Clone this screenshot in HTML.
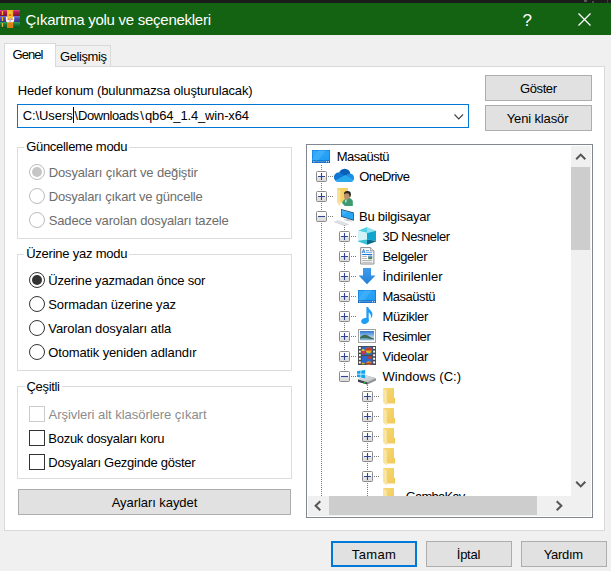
<!DOCTYPE html>
<html lang="tr">
<head>
<meta charset="utf-8">
<title>Çıkartma yolu ve seçenekleri</title>
<style>
html,body{margin:0;padding:0}
body{width:611px;height:571px;overflow:hidden;background:#f0f0f0;font-family:"Liberation Sans",sans-serif;font-size:13px;color:#000;position:relative}
.a{position:absolute;box-sizing:border-box}
.t{position:absolute;white-space:nowrap;line-height:16px;height:16px;font-size:13px}
.t.w{color:#fff}
.t.d{color:#6d6d6d}
.t.d2{color:#8c8c8c}
.t.lg{background:#fff;box-shadow:-2px 0 0 #fff,2px 0 0 #fff}
.btn{position:absolute;box-sizing:border-box;background:#e1e1e1;border:1px solid #adadad}
.gb{position:absolute;box-sizing:border-box;border:1px solid #dcdcdc}
.rd{position:absolute;box-sizing:border-box;width:16px;height:16px;border-radius:50%;border:1px solid #333;background:#fff}
.rd.dis{border-color:#bcbcbc}
.cb{position:absolute;box-sizing:border-box;width:16px;height:16px;border:1px solid #333;background:#fff}
.cb.dis{border-color:#cccccc}
svg{position:absolute;overflow:visible}
</style>
</head>
<body>
<!-- title bar -->
<div class="a" style="left:0;top:0;width:611px;height:3px;background:#1b1b1b"></div>
<div class="a" style="left:0;top:3px;width:611px;height:32px;background:#136313"></div>
<div class="a" style="left:584px;top:0;width:3px;height:2px;background:#5a5a5a"></div>
<div class="a" style="left:592px;top:1px;width:2px;height:2px;background:#4a4a4a"></div>
<div class="a" style="left:607px;top:0;width:1px;height:3px;background:#3c3c3c"></div>
<svg style="left:0;top:10px" width="20" height="18" viewBox="0 0 20 18"><defs><linearGradient id="b1" x1="0" y1="0" x2="0" y2="1"><stop offset="0" stop-color="#d9468f"/><stop offset="0.35" stop-color="#b5194f"/><stop offset="1" stop-color="#7d1131"/></linearGradient><linearGradient id="b2" x1="0" y1="0" x2="0" y2="1"><stop offset="0" stop-color="#7474d6"/><stop offset="0.4" stop-color="#4a4ab2"/><stop offset="1" stop-color="#34348a"/></linearGradient><linearGradient id="b3" x1="0" y1="0" x2="0" y2="1"><stop offset="0" stop-color="#2fa257"/><stop offset="0.4" stop-color="#147a3a"/><stop offset="1" stop-color="#0b4f24"/></linearGradient><linearGradient id="bl" x1="0" y1="0" x2="0" y2="1"><stop offset="0" stop-color="#f2bd22"/><stop offset="0.3" stop-color="#e88f14"/><stop offset="1" stop-color="#d97a10"/></linearGradient></defs><rect x="0" y="0" width="20" height="6" fill="url(#b1)"/><rect x="0" y="6" width="20" height="6" fill="url(#b2)"/><rect x="0" y="12" width="20" height="6" fill="url(#b3)"/><rect x="1.8" y="1" width="1.3" height="4" fill="#f0b428"/><rect x="1.8" y="7" width="1.3" height="4" fill="#f0b428"/><rect x="1.8" y="13" width="1.3" height="4" fill="#f0b428"/><rect x="7" y="0" width="6.2" height="18" fill="url(#bl)"/><path d="M7.6 4.2C7.6 2 8.6 1.2 10.1 1.2C11.6 1.2 12.6 2 12.6 4.2V8.4H7.6Z" fill="#f4c32e"/><path d="M8.8 4.2H11.4V6H8.8Z" fill="#d9780f"/><path d="M5.9 6.8H7.6V10H12.6V6.8H14.2V10.2C14.2 11.6 13.4 12.2 12.2 12.2H7.9C6.7 12.2 5.9 11.6 5.9 10.2Z" fill="#f4f4f6"/><rect x="9.3" y="8" width="1.6" height="4" fill="#b9bcc4"/></svg>
<svg style="left:577.5px;top:13px" width="13" height="13" viewBox="0 0 13 13"><path d="M0.5 0.5 L12.5 12.5 M12.5 0.5 L0.5 12.5" stroke="#fff" stroke-width="1.3" fill="none"/></svg>

<!-- tab control -->
<div class="a" style="left:4px;top:66px;width:601px;height:465px;background:#fff;border:1px solid #d9d9d9"></div>
<div class="a" style="left:55px;top:45px;width:56px;height:22px;background:#f0f0f0;border:1px solid #d9d9d9"></div>
<div class="a" style="left:4px;top:43px;width:52px;height:24px;background:#fff;border:1px solid #d9d9d9;border-bottom:none"></div>

<!-- combo -->
<div class="a" style="left:17px;top:104px;width:452px;height:24px;background:#fff;border:1px solid #0078d7"></div>
<div class="a" style="left:73px;top:107px;width:1px;height:16px;background:#000"></div>
<svg style="left:453px;top:113px" width="12" height="8" viewBox="0 0 12 8"><path d="M1.5 1.5 L5.75 6 L10 1.5" stroke="#404040" stroke-width="1.1" fill="none"/></svg>

<!-- buttons -->
<div class="btn" style="left:485px;top:75px;width:107px;height:26px"></div>
<div class="btn" style="left:485px;top:105px;width:107px;height:26px"></div>
<div class="btn" style="left:18px;top:489px;width:273px;height:26px"></div>
<div class="btn" style="left:331px;top:541px;width:86px;height:26px;border:2px solid #0078d7"></div>
<div class="btn" style="left:426px;top:541px;width:86px;height:26px"></div>
<div class="btn" style="left:521px;top:541px;width:86px;height:26px"></div>

<!-- group boxes -->
<div class="gb" style="left:17px;top:147px;width:275px;height:92px"></div>
<div class="gb" style="left:17px;top:254px;width:275px;height:117px"></div>
<div class="gb" style="left:17px;top:386px;width:275px;height:93px"></div>

<!-- radios -->
<div class="rd dis" style="left:29px;top:164px"><div class="a" style="left:2px;top:2px;width:10px;height:10px;border-radius:50%;background:#c6c6c6"></div></div>
<div class="rd dis" style="left:29px;top:188px"></div>
<div class="rd dis" style="left:29px;top:212px"></div>
<div class="rd" style="left:29px;top:272px"><div class="a" style="left:2px;top:2px;width:10px;height:10px;border-radius:50%;background:#333"></div></div>
<div class="rd" style="left:29px;top:296px"></div>
<div class="rd" style="left:29px;top:320px"></div>
<div class="rd" style="left:29px;top:344px"></div>

<!-- checkboxes -->
<div class="cb dis" style="left:29px;top:406px"></div>
<div class="cb" style="left:29px;top:430px"></div>
<div class="cb" style="left:29px;top:454px"></div>

<span class="t w" style="left:25.5px;top:11px;font-size:15px;line-height:18px;height:18px;letter-spacing:-0.262px;">Çıkartma yolu ve seçenekleri</span>
<span class="t w" style="left:522.5px;top:11px;font-size:17px;line-height:20px;height:20px;">?</span>
<span class="t" style="left:12.5px;top:47px;letter-spacing:-0.926px;">Genel</span>
<span class="t" style="left:60px;top:49px;letter-spacing:-0.406px;">Gelişmiş</span>
<span class="t" style="left:17.7px;top:83px;letter-spacing:-0.133px;">Hedef konum (bulunmazsa oluşturulacak)</span>
<span class="t" style="left:22.7px;top:108px;letter-spacing:-0.080px;">C:\Users</span>
<span class="t" style="left:74.6px;top:108px;">\</span>
<span class="t" style="left:78px;top:108px;letter-spacing:-0.416px;">Downloads</span>
<span class="t" style="left:140.2px;top:108px;">\</span>
<span class="t" style="left:145px;top:108px;letter-spacing:-0.150px;">qb64_1.4_win-x64</span>
<span class="t" style="left:520px;top:81px;letter-spacing:-0.403px;">Göster</span>
<span class="t" style="left:506.7px;top:111px;letter-spacing:-0.133px;">Yeni klasör</span>
<span class="t lg" style="left:26.2px;top:139px;letter-spacing:-0.300px;">Güncelleme modu</span>
<span class="t d" style="left:48.75px;top:165px;letter-spacing:-0.155px;">Dosyaları çıkart ve değiştir</span>
<span class="t d" style="left:48.75px;top:189px;letter-spacing:-0.211px;">Dosyaları çıkart ve güncelle</span>
<span class="t d" style="left:48.75px;top:213px;letter-spacing:-0.167px;">Sadece varolan dosyaları tazele</span>
<span class="t lg" style="left:26.2px;top:246px;letter-spacing:-0.232px;">Üzerine yaz modu</span>
<span class="t" style="left:48.3px;top:273px;letter-spacing:-0.202px;">Üzerine yazmadan önce sor</span>
<span class="t" style="left:48.3px;top:297px;letter-spacing:-0.125px;">Sormadan üzerine yaz</span>
<span class="t" style="left:48.3px;top:321px;letter-spacing:-0.085px;">Varolan dosyaları atla</span>
<span class="t" style="left:48.3px;top:345px;letter-spacing:-0.144px;">Otomatik yeniden adlandır</span>
<span class="t lg" style="left:26.5px;top:379px;letter-spacing:-0.318px;">Çeşitli</span>
<span class="t d2" style="left:48.5px;top:407px;letter-spacing:-0.031px;">Arşivleri alt klasörlere çıkart</span>
<span class="t" style="left:48.3px;top:431px;letter-spacing:-0.269px;">Bozuk dosyaları koru</span>
<span class="t" style="left:48.3px;top:455px;letter-spacing:-0.276px;">Dosyaları Gezginde göster</span>
<span class="t" style="left:111.75px;top:495px;letter-spacing:-0.069px;">Ayarları kaydet</span>
<span class="t" style="left:351.8px;top:547px;letter-spacing:0.344px;">Tamam</span>
<span class="t" style="left:456.8px;top:547px;letter-spacing:-0.270px;">İptal</span>
<span class="t" style="left:543.75px;top:547px;letter-spacing:-0.338px;">Yardım</span>

<!-- tree -->
<div class="a" style="left:306px;top:144px;width:287px;height:374px;border:1px solid #828790;background:#fff;overflow:hidden">
 <div class="a" style="left:0;top:0;width:264px;height:351px;overflow:hidden">
<svg style="left:0;top:0" width="264" height="351" viewBox="0 0 264 351">
<defs><linearGradient id="bx" x1="0" y1="0" x2="0" y2="1"><stop offset="0" stop-color="#fff"/><stop offset="0.45" stop-color="#fbfbfb"/><stop offset="0.55" stop-color="#e6e6e6"/><stop offset="1" stop-color="#dadada"/></linearGradient>
<linearGradient id="dk" x1="0" y1="0" x2="1" y2="1"><stop offset="0" stop-color="#35adfb"/><stop offset="1" stop-color="#1b98f4"/></linearGradient><linearGradient id="dl" x1="0" y1="0" x2="0" y2="1"><stop offset="0" stop-color="#3f9cec"/><stop offset="1" stop-color="#2380da"/></linearGradient><linearGradient id="sky" x1="0" y1="0" x2="0" y2="1"><stop offset="0" stop-color="#2f78cf"/><stop offset="0.6" stop-color="#a9cdf0"/><stop offset="1" stop-color="#e4eef6"/></linearGradient><linearGradient id="drv" x1="0" y1="0" x2="1" y2="1"><stop offset="0" stop-color="#e9ebed"/><stop offset="1" stop-color="#b4b9be"/></linearGradient><linearGradient id="fd" x1="0" y1="0" x2="1" y2="1"><stop offset="0" stop-color="#f6d977"/><stop offset="1" stop-color="#f0c95a"/></linearGradient>
</defs>
<path d="M14.5 20V355" stroke="#7a7a7a" stroke-width="1" stroke-dasharray="1 1" fill="none"/>
<path d="M37.5 80V226" stroke="#7a7a7a" stroke-width="1" stroke-dasharray="1 1" fill="none"/>
<path d="M60.5 240V355" stroke="#7a7a7a" stroke-width="1" stroke-dasharray="1 1" fill="none"/>
<path d="M21 31.5h5" stroke="#7a7a7a" stroke-width="1" stroke-dasharray="1 1" fill="none"/>
<rect x="9.5" y="26.5" width="10" height="10" rx="1" fill="url(#bx)" stroke="#8a8a8a"/><path d="M11 31.5h7M14.5 28v7" stroke="#2f4496" stroke-width="1.1" fill="none"/>
<path d="M21 51.5h5" stroke="#7a7a7a" stroke-width="1" stroke-dasharray="1 1" fill="none"/>
<rect x="9.5" y="46.5" width="10" height="10" rx="1" fill="url(#bx)" stroke="#8a8a8a"/><path d="M11 51.5h7M14.5 48v7" stroke="#2f4496" stroke-width="1.1" fill="none"/>
<path d="M21 71.5h5" stroke="#7a7a7a" stroke-width="1" stroke-dasharray="1 1" fill="none"/>
<rect x="9.5" y="66.5" width="10" height="10" rx="1" fill="url(#bx)" stroke="#8a8a8a"/><path d="M11 71.5h7" stroke="#2f4496" stroke-width="1.1" fill="none"/>
<path d="M44 91.5h5" stroke="#7a7a7a" stroke-width="1" stroke-dasharray="1 1" fill="none"/>
<rect x="32.5" y="86.5" width="10" height="10" rx="1" fill="url(#bx)" stroke="#8a8a8a"/><path d="M34 91.5h7M37.5 88v7" stroke="#2f4496" stroke-width="1.1" fill="none"/>
<path d="M44 111.5h5" stroke="#7a7a7a" stroke-width="1" stroke-dasharray="1 1" fill="none"/>
<rect x="32.5" y="106.5" width="10" height="10" rx="1" fill="url(#bx)" stroke="#8a8a8a"/><path d="M34 111.5h7M37.5 108v7" stroke="#2f4496" stroke-width="1.1" fill="none"/>
<path d="M44 131.5h5" stroke="#7a7a7a" stroke-width="1" stroke-dasharray="1 1" fill="none"/>
<rect x="32.5" y="126.5" width="10" height="10" rx="1" fill="url(#bx)" stroke="#8a8a8a"/><path d="M34 131.5h7M37.5 128v7" stroke="#2f4496" stroke-width="1.1" fill="none"/>
<path d="M44 151.5h5" stroke="#7a7a7a" stroke-width="1" stroke-dasharray="1 1" fill="none"/>
<rect x="32.5" y="146.5" width="10" height="10" rx="1" fill="url(#bx)" stroke="#8a8a8a"/><path d="M34 151.5h7M37.5 148v7" stroke="#2f4496" stroke-width="1.1" fill="none"/>
<path d="M44 171.5h5" stroke="#7a7a7a" stroke-width="1" stroke-dasharray="1 1" fill="none"/>
<rect x="32.5" y="166.5" width="10" height="10" rx="1" fill="url(#bx)" stroke="#8a8a8a"/><path d="M34 171.5h7M37.5 168v7" stroke="#2f4496" stroke-width="1.1" fill="none"/>
<path d="M44 191.5h5" stroke="#7a7a7a" stroke-width="1" stroke-dasharray="1 1" fill="none"/>
<rect x="32.5" y="186.5" width="10" height="10" rx="1" fill="url(#bx)" stroke="#8a8a8a"/><path d="M34 191.5h7M37.5 188v7" stroke="#2f4496" stroke-width="1.1" fill="none"/>
<path d="M44 211.5h5" stroke="#7a7a7a" stroke-width="1" stroke-dasharray="1 1" fill="none"/>
<rect x="32.5" y="206.5" width="10" height="10" rx="1" fill="url(#bx)" stroke="#8a8a8a"/><path d="M34 211.5h7M37.5 208v7" stroke="#2f4496" stroke-width="1.1" fill="none"/>
<path d="M44 231.5h5" stroke="#7a7a7a" stroke-width="1" stroke-dasharray="1 1" fill="none"/>
<rect x="32.5" y="226.5" width="10" height="10" rx="1" fill="url(#bx)" stroke="#8a8a8a"/><path d="M34 231.5h7" stroke="#2f4496" stroke-width="1.1" fill="none"/>
<path d="M67 251.5h5" stroke="#7a7a7a" stroke-width="1" stroke-dasharray="1 1" fill="none"/>
<rect x="55.5" y="246.5" width="10" height="10" rx="1" fill="url(#bx)" stroke="#8a8a8a"/><path d="M57 251.5h7M60.5 248v7" stroke="#2f4496" stroke-width="1.1" fill="none"/>
<path d="M67 271.5h5" stroke="#7a7a7a" stroke-width="1" stroke-dasharray="1 1" fill="none"/>
<rect x="55.5" y="266.5" width="10" height="10" rx="1" fill="url(#bx)" stroke="#8a8a8a"/><path d="M57 271.5h7M60.5 268v7" stroke="#2f4496" stroke-width="1.1" fill="none"/>
<path d="M67 291.5h5" stroke="#7a7a7a" stroke-width="1" stroke-dasharray="1 1" fill="none"/>
<rect x="55.5" y="286.5" width="10" height="10" rx="1" fill="url(#bx)" stroke="#8a8a8a"/><path d="M57 291.5h7M60.5 288v7" stroke="#2f4496" stroke-width="1.1" fill="none"/>
<path d="M67 311.5h5" stroke="#7a7a7a" stroke-width="1" stroke-dasharray="1 1" fill="none"/>
<rect x="55.5" y="306.5" width="10" height="10" rx="1" fill="url(#bx)" stroke="#8a8a8a"/><path d="M57 311.5h7M60.5 308v7" stroke="#2f4496" stroke-width="1.1" fill="none"/>
<path d="M67 331.5h5" stroke="#7a7a7a" stroke-width="1" stroke-dasharray="1 1" fill="none"/>
<rect x="55.5" y="326.5" width="10" height="10" rx="1" fill="url(#bx)" stroke="#8a8a8a"/><path d="M57 331.5h7M60.5 328v7" stroke="#2f4496" stroke-width="1.1" fill="none"/>
<path d="M61 351.5h9" stroke="#7a7a7a" stroke-width="1" stroke-dasharray="1 1" fill="none"/>
<g transform="translate(-307 -145)">
<g transform="translate(312 150)"><rect x="0" y="0" width="18" height="13" fill="#0f74d6"/><rect x="0.6" y="0.6" width="16.8" height="11.8" fill="url(#dk)"/><path d="M7 0H14L6 10.5H0V9.5Z" fill="#5bbcfb" opacity=".35"/><rect x="0" y="10.4" width="18" height="2.6" fill="#0f67bd"/><rect x="3" y="11.5" width="10.4" height="0.6" fill="#7fc0f4"/><rect x="1.3" y="11.2" width="1.1" height="1.1" fill="#fff"/><rect x="13.9" y="11.2" width="1.1" height="1.1" fill="#fff"/><rect x="15.8" y="11.2" width="1.1" height="1.1" fill="#fff"/></g>
<g transform="translate(334 169)"><circle cx="10.7" cy="5.4" r="5.7" fill="#0b5fb6"/><path d="M11.6 7.2C12.4 5.4 14.2 4.4 16 4.6C18.4 4.8 20.1 6.6 20.1 8.9C20.1 11.2 18.4 13 16.2 13H10Z" fill="#1b8de2"/><path d="M4.7 13C2.1 13 0 10.9 0 8.3C0 5.7 2.1 3.6 4.7 3.6C6 3.6 7.2 4.1 8 5L14 9.4L10 13Z" fill="#0f77d3"/><path d="M1.6 11.2L11.3 6L19.4 10.8C18.8 12.2 17.6 13 16.2 13H4.7C3.4 13 2.3 12.3 1.6 11.2Z" fill="#2aa8ec"/></g>
<g transform="translate(337 188)"><path d="M0.2 0H10.9V14.5H3.5V14H0.2Z" fill="#f5d164"/><path d="M0.1 0.4L3.5 2.5V17.6L2.4 17.4L0.1 14.4Z" fill="#f9e294"/><path d="M5 15C5.6 13 7 11.5 8.6 10.4L12.4 10C14.2 10.6 15.8 12 15.8 13.4V17.9H7.8Z" fill="#3f9a70"/><path d="M8.4 11.6L9.9 11.4L9 15L8.2 14Z" fill="#d8efe6"/><ellipse cx="9.7" cy="8" rx="2.7" ry="3.6" fill="#b8906c"/><path d="M7 6.4C6.8 3.6 8.6 2.8 10.4 2.9C13 2.8 14 4.2 13.9 6.5C13.9 8 13.2 9.4 12.4 9.9C12.6 8 12.2 6.4 11.4 5.6C10 5 8.4 5.2 7 6.4Z" fill="#25221f"/></g>
<g transform="translate(334 209)"><path d="M7.05 -0.1L19.8 3.4V11.7L7.05 7.8Z" fill="#2a3846"/><path d="M7.75 0.9L19.1 4V10.7L7.75 7.2Z" fill="#27a6f8"/><path d="M7.75 0.9L14.5 2.75L7.75 6.4Z" fill="#58bdfb" opacity=".55"/><path d="M12.4 9.3L15.6 10.3V11.4L12.4 10.6Z" fill="#a9b2ba"/><path d="M10.2 10.1L17.8 11.8V12.8L10.2 11.3Z" fill="#c6ced6"/><path d="M0.2 12.4L4.3 11L14.9 14.9L10.7 16.4Z" fill="#dde1e5"/><path d="M0.2 12.4L10.7 16.4L14.9 14.9V15.5L10.7 17L0.2 13Z" fill="#b6bec6"/></g>
<g transform="translate(358 227)"><path d="M0 3.8L9 0V6Z" fill="#52cfe2"/><path d="M9 0L18 3.8L9 6Z" fill="#93e2ef"/><path d="M0 3.8L9 6V12.6L0 13.8Z" fill="#d2f3f7"/><path d="M9 6L18 3.8V13.8L9 12.6Z" fill="#0ea6cf"/><path d="M0 13.8L9 12.6V17.8L0 14.6Z" fill="#3cc2d6"/><path d="M9 12.6L18 13.8V14.6L9 17.8Z" fill="#07698c"/></g>
<g transform="translate(360 247)"><path d="M0.7 0.6H10.6L13.9 3.9V17H0.7Z" fill="#fff" stroke="#8a8a8a" stroke-width="1"/><path d="M10.6 0.6V3.9H13.9" fill="#f2f2f2" stroke="#8a8a8a" stroke-width="0.8"/><path d="M2.2 6L3.6 2.2L4.8 6M2.7 4.8H4.4" stroke="#2b7bd6" stroke-width="0.9" fill="none"/><path d="M5.8 3.5H9.2M5.8 5.3H12" stroke="#3d8ee0" stroke-width="0.8"/><path d="M2.2 7.5H12.2" stroke="#1a78d8" stroke-width="1.1"/><path d="M2.2 9.5H7M2.2 11.5H7M2.2 13.5H12.2M2.2 15.3H12.2" stroke="#a0a0a0" stroke-width="0.8"/><rect x="8.2" y="8.8" width="4" height="3.4" fill="#4e8250"/><rect x="8.2" y="8.8" width="4" height="1.5" fill="#6aa0e0"/></g>
<g transform="translate(358.6 268)"><path d="M4.4 0H12.4V7.6H16.9L8.4 16.2L0 7.6H4.4Z" fill="url(#dl)"/></g>
<g transform="translate(358 290)"><rect x="0" y="0" width="18" height="13" fill="#0f74d6"/><rect x="0.6" y="0.6" width="16.8" height="11.8" fill="url(#dk)"/><path d="M7 0H14L6 10.5H0V9.5Z" fill="#5bbcfb" opacity=".35"/><rect x="0" y="10.4" width="18" height="2.6" fill="#0f67bd"/><rect x="3" y="11.5" width="10.4" height="0.6" fill="#7fc0f4"/><rect x="1.3" y="11.2" width="1.1" height="1.1" fill="#fff"/><rect x="13.9" y="11.2" width="1.1" height="1.1" fill="#fff"/><rect x="15.8" y="11.2" width="1.1" height="1.1" fill="#fff"/></g>
<g transform="translate(361 307)"><ellipse cx="4" cy="13.9" rx="3.9" ry="2.9" fill="#1e9df6" transform="rotate(-20 4 13.9)"/><path d="M5.4 0H7.1C7.6 1.4 8.6 2.4 9.6 3.4C10.8 4.6 11.6 5.8 11.4 7.8C11.3 9.4 10.6 10.8 9.6 12.2C10.2 10 10.2 8 8.8 6.4C8.4 6 8 5.7 7.7 5.5V14H5.4Z" fill="#1e9df6"/></g>
<g transform="translate(358 329)"><rect x="0.5" y="0.5" width="17" height="13" fill="#fff" stroke="#a3a3a3"/><rect x="2" y="2" width="14" height="10" fill="url(#sky)"/><path d="M2 8.2C4 6.2 6 5 8.4 6C10.6 7 13 8.6 16 9.4V10.4H2Z" fill="#3f6c52"/><path d="M2 9.6C6 8.6 10 9.6 16 10.2V12H2Z" fill="#7fb2d4"/><path d="M2 11H16V12H2Z" fill="#dbe9f2"/></g>
<g transform="translate(358 346)"><rect x="0" y="0" width="18" height="19" fill="#4a4a4a"/><rect x="0.9" y="1" width="1.9" height="2" fill="#fff"/><rect x="15.2" y="1" width="1.9" height="2" fill="#fff"/><rect x="0.9" y="4.6" width="1.9" height="2" fill="#fff"/><rect x="15.2" y="4.6" width="1.9" height="2" fill="#fff"/><rect x="0.9" y="8.2" width="1.9" height="2" fill="#fff"/><rect x="15.2" y="8.2" width="1.9" height="2" fill="#fff"/><rect x="0.9" y="11.8" width="1.9" height="2" fill="#fff"/><rect x="15.2" y="11.8" width="1.9" height="2" fill="#fff"/><rect x="0.9" y="15.4" width="1.9" height="2" fill="#fff"/><rect x="15.2" y="15.4" width="1.9" height="2" fill="#fff"/><rect x="3.7" y="0.8" width="10.6" height="8.2" fill="#2c66c9"/><rect x="3.7" y="10" width="10.6" height="8.2" fill="#2c66c9"/><ellipse cx="10.6" cy="4.4" rx="2.8" ry="3" fill="#e0b020"/><path d="M7.8 4.4A2.8 3 0 0 1 13.4 4.4Z" fill="#c8382a"/><path d="M9 7L12.2 7L10.6 9Z" fill="#3c9a3c"/><path d="M3.7 4L7 5L7 8.2L3.7 8.2Z" fill="#c23a4a"/><path d="M3.7 3.2H6.5V5H3.7Z" fill="#e6c32a"/><ellipse cx="11.6" cy="11.4" rx="1.6" ry="1.6" fill="#c8382a"/><ellipse cx="10.8" cy="17" rx="2.6" ry="1.8" fill="#e0b020"/><path d="M8.2 16.6H13.4V18.2H8.2Z" fill="#c8382a"/><path d="M3.7 16.4L6.6 17L6.6 18.2H3.7Z" fill="#d8b020"/></g>
<g transform="translate(357 370)"><path d="M1 9.4L9.4 5.4L19 8.2V10.6L10.4 14.6L1 11.8Z" fill="#8d9297"/><path d="M1 9.4L9.4 5.4L19 8.2L10.4 12.2Z" fill="url(#drv)"/><path d="M1 9.6L10.4 12.4V14.6L1 11.8Z" fill="#3c4044"/><rect x="6.9" y="12" width="1.5" height="1.3" fill="#35d24a"/><path d="M0 1.2L3.6 0.6V3.8H0ZM4.2 0.5L8.2 0V3.8H4.2ZM0 4.4H3.6V7.6L0 7.1ZM4.2 4.4H8.2V8.3L4.2 7.7Z" fill="#12a4ee"/></g>
<g transform="translate(383 388)"><path d="M0.2 0H11V10H12V15.4H3.4V14H0.2Z" fill="url(#fd)"/><path d="M0 0.3L3.9 2.8V17L2.6 16.8L0 14.2Z" fill="#fae5a0"/></g>
<g transform="translate(383 408)"><path d="M0.2 0H11V10H12V15.4H3.4V14H0.2Z" fill="url(#fd)"/><path d="M0 0.3L3.9 2.8V17L2.6 16.8L0 14.2Z" fill="#fae5a0"/></g>
<g transform="translate(383 428)"><path d="M0.2 0H11V10H12V15.4H3.4V14H0.2Z" fill="url(#fd)"/><path d="M0 0.3L3.9 2.8V17L2.6 16.8L0 14.2Z" fill="#fae5a0"/></g>
<g transform="translate(383 448)"><path d="M0.2 0H11V10H12V15.4H3.4V14H0.2Z" fill="url(#fd)"/><path d="M0 0.3L3.9 2.8V17L2.6 16.8L0 14.2Z" fill="#fae5a0"/></g>
<g transform="translate(383 468)"><path d="M0.2 0H11V10H12V15.4H3.4V14H0.2Z" fill="url(#fd)"/><path d="M0 0.3L3.9 2.8V17L2.6 16.8L0 14.2Z" fill="#fae5a0"/></g>
<g transform="translate(383 488)"><path d="M0.2 0H11V10H12V15.4H3.4V14H0.2Z" fill="url(#fd)"/><path d="M0 0.3L3.9 2.8V17L2.6 16.8L0 14.2Z" fill="#fae5a0"/></g>
</g>
</svg>
<span class="t" style="left:29.75px;top:4px;letter-spacing:-0.518px;">Masaüstü</span>
<span class="t" style="left:52.25px;top:24px;letter-spacing:-0.596px;">OneDrive</span>
<span class="t" style="left:52px;top:64px;letter-spacing:-0.245px;">Bu bilgisayar</span>
<span class="t" style="left:75.5px;top:84px;letter-spacing:-0.477px;">3D Nesneler</span>
<span class="t" style="left:75.5px;top:104px;letter-spacing:-0.386px;">Belgeler</span>
<span class="t" style="left:75.5px;top:124px;letter-spacing:0.001px;">İndirilenler</span>
<span class="t" style="left:75.5px;top:144px;letter-spacing:-0.482px;">Masaüstü</span>
<span class="t" style="left:75.5px;top:164px;letter-spacing:-0.379px;">Müzikler</span>
<span class="t" style="left:75.5px;top:184px;letter-spacing:-0.435px;">Resimler</span>
<span class="t" style="left:75.5px;top:204px;letter-spacing:-0.246px;">Videolar</span>
<span class="t" style="left:75.5px;top:224px;letter-spacing:0.053px;">Windows (C:)</span>
<span class="t" style="left:98.8px;top:344px;letter-spacing:-0.792px;">GambaKav</span>
 </div>
 <!-- v scrollbar -->
 <div class="a" style="left:264px;top:1px;width:20px;height:350px;background:#f0f0f0"></div>
 <div class="a" style="left:264px;top:22px;width:19px;height:83px;background:#cdcdcd"></div>
 <svg style="left:268px;top:7px" width="12" height="9" viewBox="0 0 12 9"><path d="M1.2 7.3 L5.75 2.6 L10.3 7.3" stroke="#555" stroke-width="2" fill="none"/></svg>
 <svg style="left:268px;top:335px" width="12" height="9" viewBox="0 0 12 9"><path d="M1.2 1.7 L5.75 6.4 L10.3 1.7" stroke="#555" stroke-width="2" fill="none"/></svg>
 <!-- h scrollbar -->
 <div class="a" style="left:1px;top:351px;width:283px;height:20px;background:#f0f0f0"></div>
 <div class="a" style="left:22px;top:351px;width:208px;height:19px;background:#cdcdcd"></div>
 <svg style="left:6px;top:355px" width="9" height="12" viewBox="0 0 9 12"><path d="M7.3 1.2 L2.6 5.75 L7.3 10.3" stroke="#555" stroke-width="2" fill="none"/></svg>
 <svg style="left:248px;top:355px" width="9" height="12" viewBox="0 0 9 12"><path d="M1.7 1.2 L6.4 5.75 L1.7 10.3" stroke="#555" stroke-width="2" fill="none"/></svg>
</div>
</body>
</html>
